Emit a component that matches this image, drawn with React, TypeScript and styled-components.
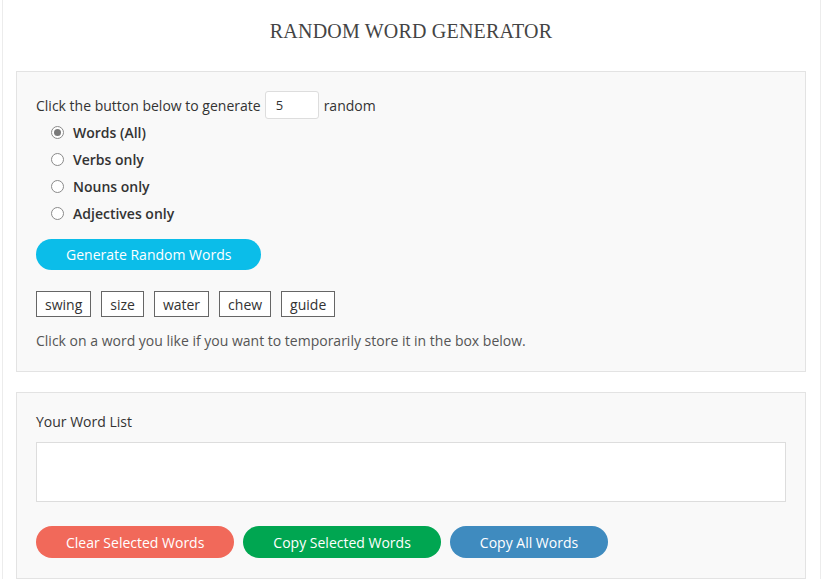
import * as React from "react";
import styled, { createGlobalStyle } from "styled-components";

const GlobalStyle = createGlobalStyle`
  html, body {
    margin: 0;
    padding: 0;
    background: #ffffff;
  }
  body {
    font-family: "Open Sans", "Liberation Sans", sans-serif;
    font-size: 14px;
    color: #333333;
  }
`;

const Page = styled.div`
  margin: 0 1px 0 2px;
  min-height: 579px;
  border-left: 1px solid #ececec;
  border-right: 1px solid #ececec;
  padding: 0 14px 0 13px;
  box-sizing: border-box;
`;

const Title = styled.h1`
  margin: 0 0 25px;
  padding-top: 16px;
  font-family: "Liberation Serif", "DejaVu Serif", serif;
  font-weight: 400;
  font-size: 20px;
  line-height: 30px;
  letter-spacing: 0.2px;
  text-align: center;
  color: #444444;
`;

const Panel = styled.section`
  display: flex;
  flex-direction: column;
  align-items: flex-start;
  background: #f9f9f9;
  border: 1px solid #e3e3e3;
  padding: 19px 19px 20px 19px;
  & + & {
    margin-top: 20px;
  }
`;

const CountRow = styled.div`
  display: flex;
  align-items: center;
  height: 28px;
  gap: 4px;
`;

const CountInput = styled.input`
  width: 54px;
  height: 28px;
  box-sizing: border-box;
  border: 1px solid #dddddd;
  border-radius: 3px;
  background: #ffffff;
  padding: 0 10px;
  font-family: inherit;
  font-size: 13px;
  color: #333333;
  margin-right: 1px;
`;

const RadioList = styled.div`
  display: flex;
  flex-direction: column;
  padding-left: 15px;
`;

const RadioLabel = styled.label`
  display: flex;
  align-items: center;
  gap: 9px;
  height: 27px;
  font-weight: 600;
  color: #333333;
`;

const Radio = styled.input`
  appearance: none;
  width: 13px;
  height: 13px;
  margin: 0;
  border-radius: 50%;
  border: 1px solid #8a8a8a;
  background: #ffffff;
  display: grid;
  place-items: center;
  &:checked::after {
    content: "";
    width: 7px;
    height: 7px;
    border-radius: 50%;
    background: #7a7a7a;
  }
`;

const PillButton = styled.button<{ $bg: string }>`
  height: 31px;
  padding: 0 30px;
  border: none;
  border-radius: 16px;
  background: ${({ $bg }) => $bg};
  color: #ffffff;
  font-family: inherit;
  font-size: 14px;
  white-space: nowrap;
  cursor: pointer;
`;

const GenerateButton = styled(PillButton)`
  margin-top: 12px;
`;

const Chips = styled.div`
  display: flex;
  gap: 10px;
  margin-top: 21px;
`;

const Chip = styled.span`
  display: flex;
  align-items: center;
  height: 26px;
  box-sizing: border-box;
  padding: 0 8px;
  border: 1px solid #666666;
  background: #ffffff;
  color: #333333;
  font-size: 14px;
`;

const Note = styled.p`
  margin: 14px 0 0;
  line-height: 20px;
  color: #555555;
`;

const ListLabel = styled.div`
  line-height: 20px;
  color: #333333;
`;

const WordBox = styled.textarea`
  margin-top: 10px;
  width: 100%;
  height: 60px;
  box-sizing: border-box;
  border: 1px solid #dddddd;
  background: #ffffff;
  resize: none;
`;

const ActionRow = styled.div`
  display: flex;
  gap: 9px;
  margin-top: 24px;
`;

const ActionButton = styled(PillButton)`
  height: 32px;
`;

const words = ["swing", "size", "water", "chew", "guide"];
const kinds = ["Words (All)", "Verbs only", "Nouns only", "Adjectives only"];

export default function App() {
  const [kind, setKind] = React.useState(0);
  const [count, setCount] = React.useState("5");

  return (
    <Page>
      <GlobalStyle />
      <Title>RANDOM WORD GENERATOR</Title>
      <Panel>
        <CountRow>
          Click the button below to generate
          <CountInput value={count} onChange={(e) => setCount(e.target.value)} />
          random
        </CountRow>
        <RadioList>
          {kinds.map((k, i) => (
            <RadioLabel key={k}>
              <Radio
                type="radio"
                name="kind"
                checked={kind === i}
                onChange={() => setKind(i)}
              />
              {k}
            </RadioLabel>
          ))}
        </RadioList>
        <GenerateButton $bg="#0bbde9">Generate Random Words</GenerateButton>
        <Chips>
          {words.map((w) => (
            <Chip key={w}>{w}</Chip>
          ))}
        </Chips>
        <Note>Click on a word you like if you want to temporarily store it in the box below.</Note>
      </Panel>
      <Panel>
        <ListLabel>Your Word List</ListLabel>
        <WordBox />
        <ActionRow>
          <ActionButton $bg="#f1695a">Clear Selected Words</ActionButton>
          <ActionButton $bg="#00a651">Copy Selected Words</ActionButton>
          <ActionButton $bg="#3f8bbf">Copy All Words</ActionButton>
        </ActionRow>
      </Panel>
    </Page>
  );
}
